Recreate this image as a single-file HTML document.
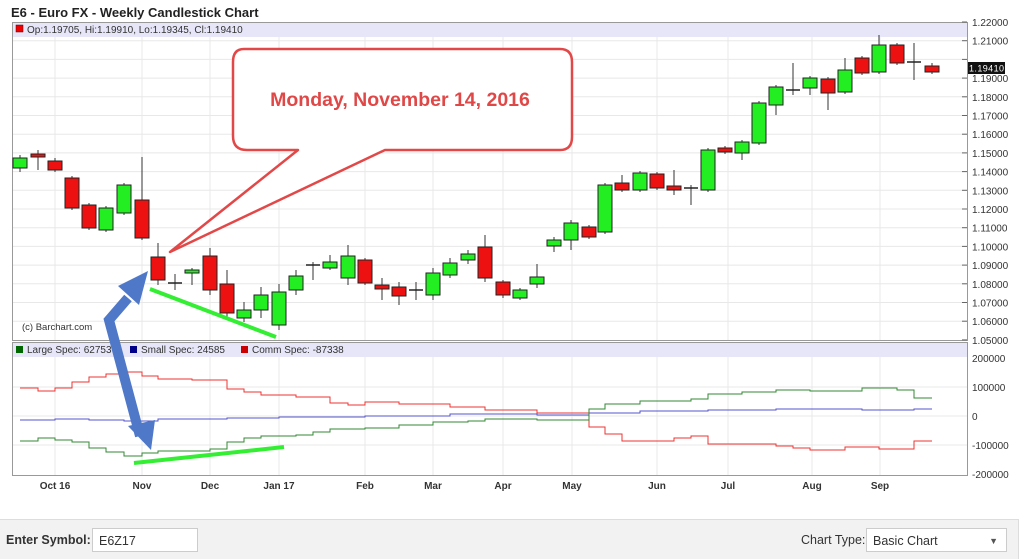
<!DOCTYPE html>
<html><head><meta charset="utf-8"><style>
body{margin:0;width:1024px;height:558px;background:#fff;font-family:"Liberation Sans",sans-serif;overflow:hidden;position:relative}
.t{position:absolute;left:11px;top:5px;font-weight:bold;font-size:13px;color:#222}
.bar{position:absolute;left:0;top:519px;width:1018px;height:39px;background:#f2f2f2;border-top:1px solid #ddd;border-right:1px solid #ddd}
.lab{position:absolute;font-size:12.5px;color:#333;z-index:2}
.inp{position:absolute;background:#fff;border:1px solid #ccc;height:24px;font-size:12.5px;color:#333;line-height:24px;padding-left:6px;box-sizing:border-box}
</style></head><body>
<div class="t">E6 - Euro FX - Weekly Candlestick Chart</div>
<svg id="s" width="1024" height="518" style="position:absolute;left:0;top:0" font-family="Liberation Sans" font-size="10">
<rect x="12" y="22" width="955" height="15" fill="#e6e6f8"/>
<rect x="12" y="342" width="955" height="15" fill="#e6e6f8"/>
<g id="grid" stroke="#e8e8e8" stroke-width="1"></g>
<rect x="12.5" y="22.5" width="955" height="318" fill="none" stroke="#999"/>
<rect x="12.5" y="342.5" width="955" height="133" fill="none" stroke="#999"/>
<rect x="16" y="25" width="7" height="7" fill="#e00" stroke="#600" stroke-width=".5"/>
<text x="27" y="33" fill="#333">Op:1.19705, Hi:1.19910, Lo:1.19345, Cl:1.19410</text>
<rect x="16" y="346" width="7" height="7" fill="#060"/><text x="27" y="353" fill="#333">Large Spec: 62753</text>
<rect x="130" y="346" width="7" height="7" fill="#008"/><text x="141" y="353" fill="#333">Small Spec: 24585</text>
<rect x="241" y="346" width="7" height="7" fill="#c00"/><text x="252" y="353" fill="#333">Comm Spec: -87338</text>
<text x="22" y="330" fill="#333" font-size="9.5">(c) Barchart.com</text>
<g id="ax" fill="#333" font-size="10"></g>
<g id="c"></g>
<polyline fill="none" stroke="#e33" stroke-width="1" points="20,388 38,388 38,391 55,391 55,388 72,388 72,382 89,382 89,377 106,377 106,374 124,374 124,372 142,372 142,376 158,376 158,379 192,379 192,380 227,380 227,389 244,389 244,392 261,392 261,395 296,395 296,397 330,397 330,403 348,403 348,405 365,405 365,402 399,402 399,404 450,404 450,407 485,407 485,410 537,410 537,413 589,413 589,427 605,427 605,434 622,434 622,441 674,441 674,438 691,438 691,436 708,436 708,444 776,444 776,446 793,446 793,448 810,448 810,450 845,450 845,447 879,447 879,449 914,449 914,441 932,441"/>
<polyline fill="none" stroke="#55c" stroke-width="1" points="20,420 55,420 55,419 89,419 89,420 124,420 124,421 158,421 158,419 227,419 227,418 279,418 279,417 365,417 365,416 450,416 450,414 537,414 537,415 589,415 589,413 640,413 640,411 708,411 708,410 776,410 776,409 862,409 862,410 914,410 914,409 932,409"/>
<polyline fill="none" stroke="#383" stroke-width="1" points="20,441 38,441 38,438 55,438 55,440 72,440 72,442 89,442 89,448 106,448 106,452 124,452 124,456 142,456 142,453 158,453 158,451 210,451 210,449 227,449 227,442 244,442 244,438 261,438 261,436 296,436 296,435 313,435 313,432 330,432 330,429 365,429 365,428 399,428 399,425 433,425 433,422 468,422 468,421 485,421 485,419 537,419 537,420 589,420 589,409 605,409 605,404 640,404 640,401 691,401 691,399 708,399 708,394 742,394 742,392 776,392 776,390 810,390 810,391 862,391 862,388 897,388 897,390 914,390 914,398 932,398"/>
<path d="M244,49 Q233,49 233,62 L233,136 Q233,150 247,150 L298,150 L170,252 L385,150 L560,150 Q572,150 572,137 L572,62 Q572,49 560,49 Z" fill="#fff" stroke="#e34848" stroke-width="2.5" stroke-linejoin="round"/>
<text x="400" y="106" text-anchor="middle" font-size="19.5" font-weight="bold" fill="#e04848">Monday, November 14, 2016</text>
<line x1="150" y1="289" x2="276" y2="337" stroke="#3e3" stroke-width="4"/>
<line x1="134" y1="463" x2="284" y2="447" stroke="#3e3" stroke-width="4"/>
<path d="M128,298 L109,320 L140,436" fill="none" stroke="#4f78c8" stroke-width="10"/>
<polygon points="148,271 118,286 139,305" fill="#4f78c8"/>
<polygon points="151,450 128,426 155,420" fill="#4f78c8"/>
<rect x="968" y="62" width="37" height="12" fill="#111"/>
<text x="969" y="71.5" fill="#fff" font-size="9" textLength="35">1.19410</text>
</svg>
<div class="bar"></div>
<div class="lab" style="left:6px;top:533px;font-weight:bold">Enter Symbol:</div>
<div class="inp" style="left:92px;top:528px;width:106px">E6Z17</div>
<div class="lab" style="left:801px;top:533px">Chart Type:</div>
<div class="inp" style="left:866px;top:528px;width:141px">Basic Chart<span style="position:absolute;right:8px;font-size:9px;color:#555">▼</span></div>
<script>
var N="http://www.w3.org/2000/svg";
function el(p,t,a,tx){var e=document.createElementNS(N,t);for(var k in a)e.setAttribute(k,a[k]);if(tx)e.textContent=tx;document.getElementById(p).appendChild(e);}
var months=[[55,"Oct 16"],[142,"Nov"],[210,"Dec"],[279,"Jan 17"],[365,"Feb"],[433,"Mar"],[503,"Apr"],[572,"May"],[657,"Jun"],[728,"Jul"],[812,"Aug"],[880,"Sep"]];
months.forEach(function(m){el("grid","line",{x1:m[0],x2:m[0],y1:37,y2:341});el("grid","line",{x1:m[0],x2:m[0],y1:357,y2:475});
el("ax","text",{x:m[0],y:489,"text-anchor":"middle","font-weight":"bold"},m[1]);});
for(var i=0;i<=17;i++){var y=22+i*18.7,v=(1.22-i*0.01).toFixed(5);if(i>0&&i<17)el("grid","line",{x1:13,x2:967,y1:y,y2:y});el("ax","line",{x1:962,x2:967,y1:y,y2:y,stroke:"#666"});if(i!=2)el("ax","text",{x:972,y:y+4},v);}
[[358,"200000"],[387,"100000"],[416,"0"],[445,"-100000"],[474,"-200000"]].forEach(function(a){if(a[0]>360&&a[0]<470)el("grid","line",{x1:13,x2:967,y1:a[0],y2:a[0]});el("ax","text",{x:972,y:a[0]+4},a[1]);});
var C=[[20,158,168,155,172,"g"],[38,154,157,150,170,"r"],[55,161,170,158,172,"r"],[72,178,208,176,210,"r"],[89,205,228,203,230,"r"],[106,208,230,206,232,"g"],[124,185,213,183,215,"g"],[142,200,238,157,240,"r"],[158,257,280,243,285,"r"],[175,283,283,274,290,"d"],[192,270,272,268,285,"g"],[210,256,290,248,295,"r"],[227,284,313,270,318,"r"],[244,310,318,302,322,"g"],[261,295,310,287,318,"g"],[279,292,325,284,330,"g"],[296,276,290,270,295,"g"],[313,265,265,262,280,"d"],[330,262,268,255,270,"g"],[348,256,278,245,285,"g"],[365,260,283,258,285,"r"],[382,285,289,278,300,"r"],[399,287,296,282,305,"r"],[416,290,290,282,300,"d"],[433,273,295,268,300,"g"],[450,263,275,258,278,"g"],[468,254,260,250,264,"g"],[485,247,278,235,282,"r"],[503,282,295,280,298,"r"],[520,290,298,288,300,"g"],[537,277,284,264,288,"g"],[554,240,246,237,252,"g"],[571,223,240,220,250,"g"],[589,227,237,225,239,"r"],[605,185,232,183,234,"g"],[622,183,190,175,192,"r"],[640,173,190,171,192,"g"],[657,174,188,172,190,"r"],[674,186,190,170,195,"r"],[691,188,188,185,205,"d"],[708,150,190,148,192,"g"],[725,148,152,146,154,"r"],[742,142,153,140,160,"g"],[759,103,143,101,145,"g"],[776,87,105,85,115,"g"],[793,90,90,63,95,"d"],[810,78,88,76,95,"g"],[828,79,93,77,110,"r"],[845,70,92,58,94,"g"],[862,58,73,56,75,"r"],[879,45,72,35,74,"g"],[897,45,63,43,65,"r"],[914,62,62,43,80,"d"],[932,66,72,63,74,"r"]];
C.forEach(function(c){el("c","line",{x1:c[0],x2:c[0],y1:c[3],y2:c[4],stroke:"#333"});
if(c[5]=="d")el("c","line",{x1:c[0]-7,x2:c[0]+7,y1:c[1],y2:c[1],stroke:"#222","stroke-width":1.5});
else el("c","rect",{x:c[0]-7,y:c[1],width:14,height:Math.max(c[2]-c[1],3),fill:c[5]=="g"?"#22ee22":"#ee1111",stroke:"#222","stroke-width":1});});
</script>
</body></html>
